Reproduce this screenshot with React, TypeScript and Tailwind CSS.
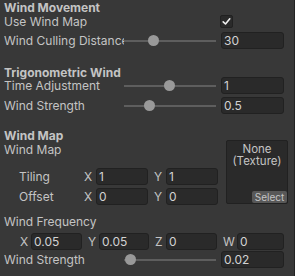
import React from "react";

const font = { fontFamily: "Inter, 'Noto Sans', sans-serif" };

function Field({ value, className = "" }: { value: string; className?: string }) {
  return (
    <div
      className={`h-[17px] bg-[#2a2a2a] border border-[#212121] rounded-[3px] flex items-center pl-[2px] text-[12px] leading-[15px] text-[#d2d2d2] ${className}`}
    >
      {value}
    </div>
  );
}

function Slider({ thumbLeft }: { thumbLeft: number }) {
  return (
    <div className="relative w-[92px] h-[17px] flex items-center shrink-0">
      <div className="w-full h-[2px] bg-[#5e5e5e]" />
      <div
        className="absolute top-[3px] w-[11px] h-[11px] rounded-full bg-[#999999]"
        style={{ left: thumbLeft }}
      />
    </div>
  );
}

function SliderRow({ label, value, thumbLeft, className = "" }: { label: string; value: string; thumbLeft: number; className?: string }) {
  return (
    <div className={`flex items-center h-[17px] ${className}`}>
      <div className="w-[120px] shrink-0 overflow-hidden whitespace-nowrap text-[12px] leading-[16px] text-[#c4c4c4]">{label}</div>
      <Slider thumbLeft={thumbLeft} />
      <Field value={value} className="ml-[5px] w-[63px]" />
    </div>
  );
}

function Header({ text, h }: { text: string; h: string }) {
  return (
    <div className={`flex items-center text-[12px] font-bold text-[#c4c4c4] ${h}`}>{text}</div>
  );
}

const lbl = "text-[12px] leading-[15px] text-[#c4c4c4] shrink-0";

export default function App() {
  return (
    <div className="w-[295px] h-[276px] bg-[#383838] flex overflow-hidden" style={font}>
      <div className="flex-1 flex flex-col pl-[4px] pr-[6px]">
        <Header text="Wind Movement" h="h-[15px] leading-[15px]" />
        <div className="flex items-center h-[13px]">
          <div className={`w-[216px] ${lbl} leading-[13px]`}>Use Wind Map</div>
          <div className="w-[13px] h-[13px] bg-[#2a2a2a] border border-[#212121] rounded-[2px] flex items-center justify-center">
            <svg width="9" height="9" viewBox="0 0 9 9">
              <path d="M1.2 4.8 L3.5 7 L7.8 1.8" stroke="#f0f0f0" strokeWidth="1.6" fill="none" strokeLinecap="round" strokeLinejoin="round" />
            </svg>
          </div>
        </div>
        <SliderRow label="Wind Culling Distance" value="30" thumbLeft={24} className="mt-[4px]" />

        <Header text="Trigonometric Wind" h="h-[11px] leading-[11px] mt-[18px]" />
        <SliderRow label="Time Adjustment" value="1" thumbLeft={40} className="mt-[-1px]" />
        <SliderRow label="Wind Strength" value="0.5" thumbLeft={20} className="mt-[3px]" />

        <Header text="Wind Map" h="h-[10px] leading-[10px] mt-[17px]" />
        <div className="flex mt-[-1px]">
          <div className="flex flex-col w-[218px] shrink-0">
            <div className={`h-[19px] flex items-center ${lbl}`}>Wind Map</div>
            <div className="flex items-center h-[17px] mt-[9px]">
              <div className={`w-[80px] pl-[15px] ${lbl}`}>Tiling</div>
              <div className={`w-[12px] ${lbl}`}>X</div>
              <Field value="1" className="w-[52px] shrink-0" />
              <div className={`w-[12px] ml-[6px] ${lbl}`}>Y</div>
              <Field value="1" className="w-[52px] shrink-0" />
            </div>
            <div className="flex items-center h-[17px] mt-[3px]">
              <div className={`w-[80px] pl-[15px] ${lbl}`}>Offset</div>
              <div className={`w-[12px] ${lbl}`}>X</div>
              <Field value="0" className="w-[52px] shrink-0" />
              <div className={`w-[12px] ml-[6px] ${lbl}`}>Y</div>
              <Field value="0" className="w-[52px] shrink-0" />
            </div>
          </div>
          <div className="ml-[4px] w-[62px] h-[64px] bg-[#2a2a2a] border border-[#212121] rounded-[2px] flex flex-col items-center">
            <div className="mt-[2px] text-[11.5px] leading-[12px] text-[#c4c4c4] text-center">None</div>
            <div className="text-[11.5px] leading-[12px] text-[#c4c4c4] text-center">(Texture)</div>
            <div className="mt-auto self-end w-[35px] h-[12px] bg-[#585858] rounded-[2px] text-[10px] leading-[12px] text-[#c4c4c4] flex items-center justify-center">Select</div>
          </div>
        </div>

        <div className={`h-[11px] mt-[11px] flex items-center text-[12px] leading-[11px] text-[#c4c4c4]`}>Wind Frequency</div>
        <div className="flex items-center h-[17px] mt-[6px]">
          <div className={`w-[11px] ml-[16px] ${lbl}`}>X</div>
          <Field value="0.05" className="w-[51px] shrink-0" />
          <div className={`w-[11px] ml-[6px] ${lbl}`}>Y</div>
          <Field value="0.05" className="w-[50px] shrink-0" />
          <div className={`w-[11px] ml-[6px] ${lbl}`}>Z</div>
          <Field value="0" className="w-[51px] shrink-0" />
          <div className={`w-[14px] ml-[6px] ${lbl}`}>W</div>
          <Field value="0" className="w-[47px] shrink-0" />
        </div>
        <SliderRow label="Wind Strength" value="0.02" thumbLeft={1} className="mt-[1px]" />
      </div>
      <div className="w-[5px] h-full border-l border-[#232323] bg-[#2e2e2e] flex flex-col">
        <div className="h-[226px] bg-[#5f5f5f]" />
      </div>
    </div>
  );
}
